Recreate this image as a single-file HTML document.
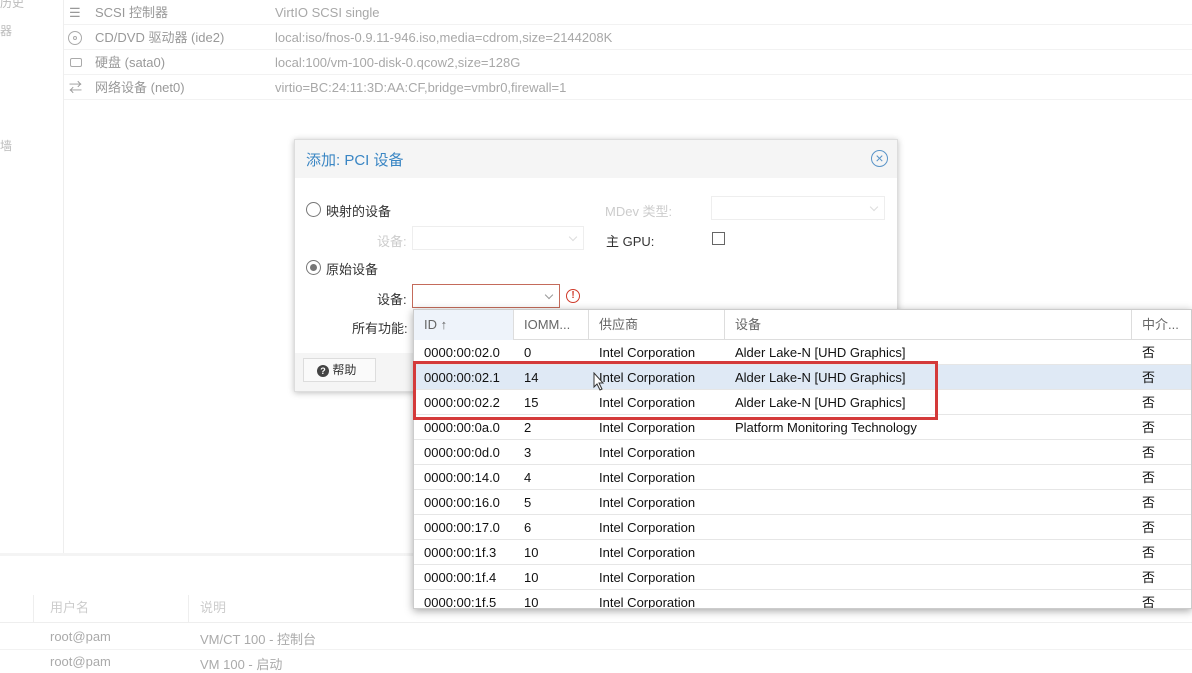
<!DOCTYPE html>
<html><head><meta charset="utf-8"><style>
*{box-sizing:border-box;margin:0;padding:0}
body{width:1192px;height:671px;overflow:hidden;background:#fff;font-family:"Liberation Sans","Noto Sans CJK SC",sans-serif;font-size:13px;position:relative;color:#000}
.a{position:absolute}
.faint{color:#bbb}
.bgrow{position:absolute;left:64px;width:1128px;height:25px;border-bottom:1px solid #f2f2f2;line-height:25px;color:#999}
.bgrow .k{position:absolute;left:31px}
.bgrow .v{position:absolute;left:211px;color:#a8a8a8}
.grid{position:absolute;left:413px;top:309px;width:779px;height:300px;background:#fff;box-shadow:0 2px 8px rgba(0,0,0,.35);overflow:hidden;border:1px solid #ccc}
.gh{height:30px;border-bottom:1px solid #ddd;position:relative;color:#666}
.gh div{position:absolute;top:0;height:30px;line-height:30px;padding-left:10px;border-right:1px solid #ddd}
.r{height:25px;border-bottom:1px solid #e6e6e6;position:relative;line-height:25px;color:#111}
.r div{position:absolute;top:0;padding-left:10px}
.c1{left:0;width:100px}.c2{left:100px;width:75px}.c3{left:175px;width:136px}.c4{left:311px;width:407px}.c5{left:718px;width:61px}
.chev{position:absolute;right:7px;top:7px;width:6px;height:6px;border-right:1px solid #bbb;border-bottom:1px solid #bbb;transform:rotate(45deg)}
</style></head><body>
<div class="a faint" style="left:0;top:-6px;font-size:12px">历史</div>
<div class="a faint" style="left:0;top:22px;font-size:12px">器</div>
<div class="a faint" style="left:0;top:137px;font-size:12px">墙</div>
<div class="a" style="left:63px;top:0;width:1px;height:553px;background:#eee"></div>
<div class="bgrow" style="top:0"><span class="a" style="left:5px;color:#999">☰</span><span class="k">SCSI 控制器</span><span class="v">VirtIO SCSI single</span></div>
<div class="bgrow" style="top:25px"><span class="a" style="left:4px;top:6px;width:14px;height:14px;border:1.5px solid #aaa;border-radius:50%"><span class="a" style="left:3.5px;top:3.5px;width:4px;height:4px;border:1px solid #aaa;border-radius:50%"></span></span><span class="k">CD/DVD 驱动器 (ide2)</span><span class="v">local:iso/fnos-0.9.11-946.iso,media=cdrom,size=2144208K</span></div>
<div class="bgrow" style="top:50px"><span class="a" style="left:6px;top:8px;width:12px;height:9px;border:1.5px solid #aaa;border-radius:2px"></span><span class="k">硬盘 (sata0)</span><span class="v">local:100/vm-100-disk-0.qcow2,size=128G</span></div>
<div class="bgrow" style="top:75px"><span class="a" style="left:5px;color:#999">⇄</span><span class="k">网络设备 (net0)</span><span class="v">virtio=BC:24:11:3D:AA:CF,bridge=vmbr0,firewall=1</span></div>
<div class="a" style="left:0;top:553px;width:1192px;height:3px;background:#f4f4f4"></div>
<div class="a" style="left:0;top:595px;width:1192px;height:28px;border-bottom:1px solid #eee;line-height:26px;color:#ccc"><span class="a" style="left:33px;top:0;height:28px;border-left:1px solid #eee"></span><span class="a" style="left:50px">用户名</span><span class="a" style="left:188px;top:0;height:28px;border-left:1px solid #eee"></span><span class="a" style="left:200px">说明</span></div>
<div class="a" style="left:50px;top:629px;color:#aaa">root@pam</div><div class="a" style="left:200px;top:629px;color:#aaa">VM/CT 100 - 控制台</div>
<div class="a" style="left:0;top:649px;width:1192px;height:1px;background:#f2f2f2"></div>
<div class="a" style="left:50px;top:654px;color:#aaa">root@pam</div><div class="a" style="left:200px;top:654px;color:#aaa">VM 100 - 启动</div>

<div class="a" style="left:294px;top:139px;width:604px;height:253px;background:#fff;box-shadow:0 1px 6px rgba(0,0,0,.25);border:1px solid #ddd">
 <div style="height:38px;background:#f5f5f5;position:relative"><span class="a" style="left:11px;top:9px;font-size:15px;color:#3a86c4">添加: PCI 设备</span>
 <span class="a" style="left:576px;top:10px;width:17px;height:17px;border:1.3px solid #5a94c8;border-radius:50%;color:#5a94c8;font-size:14px;line-height:14px;text-align:center">×</span></div>
 <span class="a" style="left:11px;top:62px;width:15px;height:15px;border:1px solid #777;border-radius:50%"></span><span class="a" style="left:31px;top:61px;color:#333">映射的设备</span>
 <span class="a" style="left:82px;top:91px;color:#ccc">设备:</span><span class="a" style="left:117px;top:86px;width:172px;height:24px;border:1px solid #eee"><i class="chev" style="border-color:#ddd"></i></span>
 <span class="a" style="left:310px;top:61px;color:#ccc">MDev 类型:</span><span class="a" style="left:416px;top:56px;width:174px;height:24px;border:1px solid #eee"><i class="chev" style="border-color:#ddd"></i></span>
 <span class="a" style="left:311px;top:91px;color:#333">主 GPU:</span><span class="a" style="left:417px;top:92px;width:13px;height:13px;border:1px solid #666"></span>
 <span class="a" style="left:11px;top:120px;width:15px;height:15px;border:1px solid #777;border-radius:50%"><span class="a" style="left:3px;top:3px;width:7px;height:7px;background:#777;border-radius:50%"></span></span><span class="a" style="left:31px;top:119px;color:#333">原始设备</span>
 <span class="a" style="left:82px;top:149px;color:#333">设备:</span><span class="a" style="left:117px;top:144px;width:148px;height:24px;border:1px solid #c46b5b"><i class="chev" style="border-color:#999"></i></span>
 <span class="a" style="left:271px;top:149px;width:14px;height:14px;border:1.5px solid #d03a2a;border-radius:50%;color:#d03a2a;font-size:10px;font-weight:bold;text-align:center;line-height:11px">!</span>
 <span class="a" style="left:57px;top:178px;color:#333">所有功能:</span>
 <div class="a" style="left:0;top:213px;width:602px;height:38px;background:#f5f5f5"><span class="a" style="left:8px;top:5px;width:73px;height:24px;border:1px solid #ddd;background:#fafafa;line-height:22px;padding-left:13px;color:#333;font-size:12px"><b style="display:inline-block;width:12px;height:12px;background:#444;border-radius:50%;color:#fff;font-size:9px;text-align:center;line-height:12px">?</b> 帮助</span></div>
</div>

<div class="grid">
 <div class="gh"><div class="c1" style="background:#eef3fa">ID ↑</div><div class="c2">IOMM...</div><div class="c3">供应商</div><div class="c4">设备</div><div class="c5" style="border:0">中介...</div></div>
 <div class="r"><div class="c1">0000:00:02.0</div><div class="c2">0</div><div class="c3">Intel Corporation</div><div class="c4">Alder Lake-N [UHD Graphics]</div><div class="c5">否</div></div>
 <div class="r" style="background:#dfe9f5"><div class="c1">0000:00:02.1</div><div class="c2">14</div><div class="c3">Intel Corporation</div><div class="c4">Alder Lake-N [UHD Graphics]</div><div class="c5">否</div></div>
 <div class="r"><div class="c1">0000:00:02.2</div><div class="c2">15</div><div class="c3">Intel Corporation</div><div class="c4">Alder Lake-N [UHD Graphics]</div><div class="c5">否</div></div>
 <div class="r"><div class="c1">0000:00:0a.0</div><div class="c2">2</div><div class="c3">Intel Corporation</div><div class="c4">Platform Monitoring Technology</div><div class="c5">否</div></div>
 <div class="r"><div class="c1">0000:00:0d.0</div><div class="c2">3</div><div class="c3">Intel Corporation</div><div class="c5">否</div></div>
 <div class="r"><div class="c1">0000:00:14.0</div><div class="c2">4</div><div class="c3">Intel Corporation</div><div class="c5">否</div></div>
 <div class="r"><div class="c1">0000:00:16.0</div><div class="c2">5</div><div class="c3">Intel Corporation</div><div class="c5">否</div></div>
 <div class="r"><div class="c1">0000:00:17.0</div><div class="c2">6</div><div class="c3">Intel Corporation</div><div class="c5">否</div></div>
 <div class="r"><div class="c1">0000:00:1f.3</div><div class="c2">10</div><div class="c3">Intel Corporation</div><div class="c5">否</div></div>
 <div class="r"><div class="c1">0000:00:1f.4</div><div class="c2">10</div><div class="c3">Intel Corporation</div><div class="c5">否</div></div>
 <div class="r"><div class="c1">0000:00:1f.5</div><div class="c2">10</div><div class="c3">Intel Corporation</div><div class="c5">否</div></div>
</div>
<div class="a" style="left:413px;top:361px;width:525px;height:59px;border:3px solid #d43a3a"></div>
<svg class="a" style="left:593px;top:372px" width="12" height="20" viewBox="0 0 12 20"><path d="M1 1 L1 15 L4 12 L7 18 L9 17 L6 11 L10 11 Z" fill="#fff" stroke="#333" stroke-width="1"/></svg>
</body></html>
